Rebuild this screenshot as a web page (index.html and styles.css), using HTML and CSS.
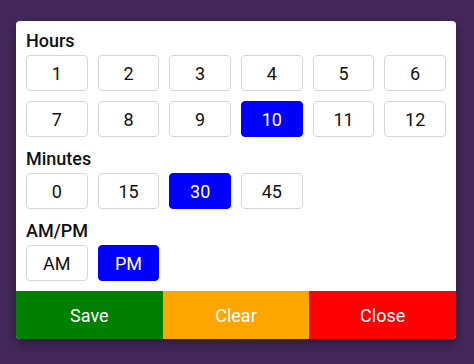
FILE: index.html
```html
<!DOCTYPE html>
<html>
<head>
<meta charset="utf-8">
<link rel="stylesheet" href="styles.css">
</head>
<body>
<div class="card">
  <div class="card-body">
    <div class="section">
      <div class="label">Hours</div>
      <div class="grid">
        <div class="opt">1</div><div class="opt">2</div><div class="opt">3</div>
        <div class="opt">4</div><div class="opt">5</div><div class="opt">6</div>
        <div class="opt">7</div><div class="opt">8</div><div class="opt">9</div>
        <div class="opt selected">10</div><div class="opt">11</div><div class="opt">12</div>
      </div>
    </div>
    <div class="section">
      <div class="label">Minutes</div>
      <div class="grid">
        <div class="opt">0</div><div class="opt">15</div><div class="opt selected">30</div><div class="opt">45</div>
      </div>
    </div>
    <div class="section">
      <div class="label">AM/PM</div>
      <div class="grid">
        <div class="opt">AM</div><div class="opt selected">PM</div>
      </div>
    </div>
  </div>
  <div class="footer">
    <div class="action save">Save</div>
    <div class="action clear">Clear</div>
    <div class="action close">Close</div>
  </div>
</div>
</body>
</html>
```
FILE: styles.css
```css
html, body {
  margin: 0;
  padding: 0;
}
body {
  background: #44285c;
  font-family: Roboto, "Liberation Sans", sans-serif;
  width: 474px;
  height: 364px;
  overflow: hidden;
}
.card {
  width: 440px;
  margin: 21px 0 0 16px;
  background: #fff;
  border-radius: 4px;
  box-shadow: 0 5px 12px rgba(0, 0, 0, 0.35);
  overflow: hidden;
}
.card-body {
  padding: 9px 10px 10px;
  display: flex;
  flex-direction: column;
  gap: 11px;
}
.label {
  font-size: 18px;
  font-weight: 500;
  line-height: 21px;
  color: #111;
  margin-bottom: 4px;
}
.grid {
  display: grid;
  grid-template-columns: repeat(6, 1fr);
  gap: 10px;
}
.opt {
  height: 36px;
  box-sizing: border-box;
  border: 1px solid #d6d6d6;
  border-radius: 4px;
  display: flex;
  align-items: center;
  justify-content: center;
  font-size: 18px;
  color: #111;
  background: #fff;
}
.opt.selected {
  background: #0000ff;
  border-color: #0000ff;
  color: #fff;
}
.footer {
  display: grid;
  grid-template-columns: repeat(3, 1fr);
  height: 48px;
}
.action {
  display: flex;
  align-items: center;
  justify-content: center;
  color: #fff;
  font-size: 18px;
}
.save { background: #008000; }
.clear { background: #ffa500; }
.close { background: #ff0000; }
```
